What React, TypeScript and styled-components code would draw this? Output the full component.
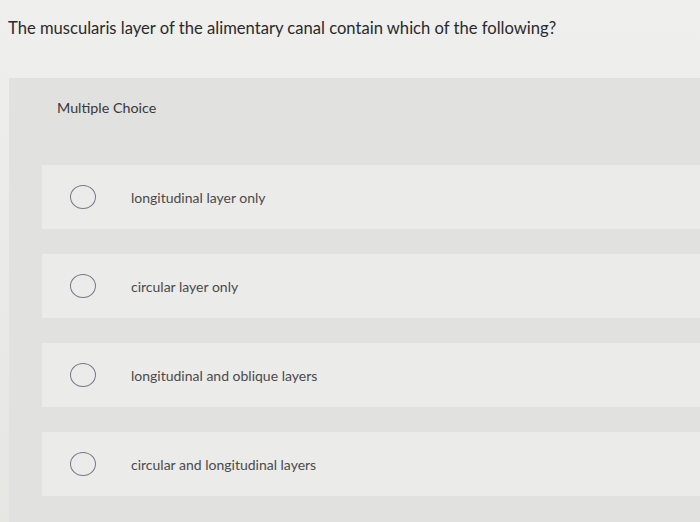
import { createGlobalStyle, styled } from "styled-components";

const GlobalStyle = createGlobalStyle`
   html, body {
      margin: 0;
      padding: 0;
      background: #ebebe9;
   }
   body {
      font-family: Lato, "Open Sans", "Liberation Sans", sans-serif;
      overflow: hidden;
   }
`;

const Page = styled.div`
   width: 700px;
   height: 522px;
   display: flex;
   flex-direction: column;
   background: linear-gradient(180deg, #efefed 0%, #ebebe9 40%, #e6e6e3 100%);
`;

const Question = styled.h1`
   margin: 18px 0 0 8px;
   font-size: 16.6px;
   font-weight: 400;
   line-height: 20px;
   color: #2a2a2c;
`;

const Panel = styled.section`
   margin: 40px 0 0 9px;
   flex: 1;
   background: #e1e1df;
   padding: 20px 0 0 0;
   display: flex;
   flex-direction: column;
`;

const Kind = styled.div`
   margin-left: 48px;
   font-size: 14.3px;
   color: #38383a;
   line-height: 20px;
`;

const Options = styled.div`
   margin: 47px 0 0 33px;
   display: flex;
   flex-direction: column;
   gap: 25px;
`;

const Option = styled.label`
   height: 64px;
   display: flex;
   align-items: center;
   background: #ebebe9;
   cursor: pointer;
`;

const Radio = styled.span`
   width: 26px;
   height: 24px;
   margin-left: 28px;
   border: 1.6px solid #78788a;
   border-radius: 50%;
   box-sizing: border-box;
   flex-shrink: 0;
`;

const OptionText = styled.span`
   margin-left: 35px;
   font-size: 14px;
   color: #4a4a4c;
`;

const choices = [
   "longitudinal layer only",
   "circular layer only",
   "longitudinal and oblique layers",
   "circular and longitudinal layers",
];

export default function App() {
   return (
      <>
         <GlobalStyle />
         <Page>
            <Question>The muscularis layer of the alimentary canal contain which of the following?</Question>
            <Panel>
               <Kind>Multiple Choice</Kind>
               <Options>
                  {choices.map((c) => (
                     <Option key={c}>
                        <Radio />
                        <OptionText>{c}</OptionText>
                     </Option>
                  ))}
               </Options>
            </Panel>
         </Page>
      </>
   );
}
